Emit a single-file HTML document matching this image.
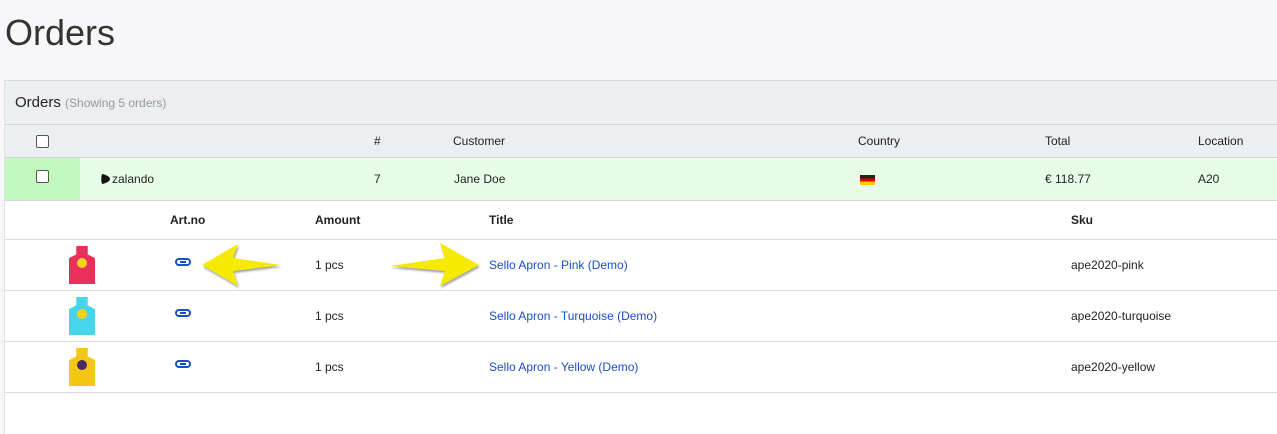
<!DOCTYPE html>
<html><head><meta charset="utf-8"><style>
*{box-sizing:border-box;margin:0;padding:0}
body{width:1277px;height:434px;background:#f7f7f9;font-family:"Liberation Sans",sans-serif;color:#222;position:relative;overflow:hidden;font-size:12px}
.abs{position:absolute}
h1{position:absolute;left:5px;top:12px;font-size:36px;font-weight:normal;color:#333;letter-spacing:0}
.panel{position:absolute;left:4px;top:80px;width:1273px;height:354px;background:#fff;border-left:1px solid #e2e2e6}
.hdr{position:absolute;left:0;top:0;width:100%;height:45px;background:#eceef2;border-top:1px solid #d8d8dc;border-bottom:1px solid #d4d6da}
.thead{position:absolute;left:0;top:45px;width:100%;height:33px;background:#eceef2;border-bottom:1px solid #d4d6da}
.grow{position:absolute;left:0;top:78px;width:100%;height:43px;background:#e8fde8;border-bottom:1px solid #d4d6da}
.cb{position:absolute;width:13px;height:13px;border:1px solid #555;border-radius:2px;background:#fff}
.sub{position:absolute;left:0;width:100%;border-bottom:1px solid #dcdcdc}
.t{position:absolute;white-space:nowrap}
a{color:#1a4fc4;text-decoration:none}
</style></head><body>
<h1>Orders</h1>
<div class="panel">
 <div class="hdr"><span class="t" style="left:10px;top:13px;font-size:15px;color:#222">Orders <span style="font-size:12px;color:#999">(Showing 5 orders)</span></span></div>
 <div class="thead">
  <div class="cb" style="left:31px;top:10px"></div>
  <span class="t" style="left:369px;top:9px">#</span>
  <span class="t" style="left:448px;top:9px">Customer</span>
  <span class="t" style="left:853px;top:9px">Country</span>
  <span class="t" style="left:1040px;top:9px">Total</span>
  <span class="t" style="left:1193px;top:9px">Location</span>
 </div>
 <div class="grow">
  <div class="abs" style="left:0;top:0;width:75px;height:42px;background:#c3f7c0"></div>
  <div class="cb" style="left:31px;top:12px"></div>
  <svg class="abs" style="left:96px;top:16px" width="9" height="10" viewBox="0 0 9 10"><path d="M1 0 C6 1 9 3 9 5 C9 7 6 9 1 10 C0 7 0 3 1 0Z" fill="#111"/></svg>
  <span class="t" style="left:107px;top:14px;font-size:12px">zalando</span>
  <span class="t" style="left:369px;top:14px">7</span>
  <span class="t" style="left:449px;top:14px">Jane Doe</span>
  <div class="abs" style="left:855px;top:17px;width:15px;height:10px;background:linear-gradient(#222 0 33%,#d00 33% 66%,#fc0 66%)"></div>
  <span class="t" style="left:1040px;top:14px">€ 118.77</span>
  <span class="t" style="left:1193px;top:14px">A20</span>
 </div>
 <div class="sub" style="top:121px;height:39px;font-weight:bold">
  <span class="t" style="left:165px;top:12px">Art.no</span>
  <span class="t" style="left:310px;top:12px">Amount</span>
  <span class="t" style="left:484px;top:12px">Title</span>
  <span class="t" style="left:1066px;top:12px">Sku</span>
 </div>
 <div class="sub" style="top:160px;height:51px">
  <div class="abs" style="left:64px;top:6px;width:26px;height:38px;background:#e8305a;clip-path:polygon(28% 0,72% 0,72% 22%,100% 32%,100% 100%,0 100%,0 32%,28% 22%)"></div>
  <div class="abs" style="left:72px;top:18px;width:10px;height:10px;border-radius:50%;background:#f5d21c"></div>
  <svg class="abs" style="left:170px;top:18px" width="16" height="8"><rect x="1" y="1" width="14" height="6" rx="3" fill="none" stroke="#1a4fc4" stroke-width="2"/><line x1="5" y1="4" x2="11" y2="4" stroke="#1a4fc4" stroke-width="2"/></svg>
  <span class="t" style="left:310px;top:18px">1 pcs</span>
  <span class="t" style="left:484px;top:18px"><a>Sello Apron - Pink (Demo)</a></span>
  <span class="t" style="left:1066px;top:18px">ape2020-pink</span>
 </div>
 <div class="sub" style="top:211px;height:51px">
  <div class="abs" style="left:64px;top:6px;width:26px;height:38px;background:#48d4ea;clip-path:polygon(28% 0,72% 0,72% 22%,100% 32%,100% 100%,0 100%,0 32%,28% 22%)"></div>
  <div class="abs" style="left:72px;top:18px;width:10px;height:10px;border-radius:50%;background:#f5d21c"></div>
  <svg class="abs" style="left:170px;top:18px" width="16" height="8"><rect x="1" y="1" width="14" height="6" rx="3" fill="none" stroke="#1a4fc4" stroke-width="2"/><line x1="5" y1="4" x2="11" y2="4" stroke="#1a4fc4" stroke-width="2"/></svg>
  <span class="t" style="left:310px;top:18px">1 pcs</span>
  <span class="t" style="left:484px;top:18px"><a>Sello Apron - Turquoise (Demo)</a></span>
  <span class="t" style="left:1066px;top:18px">ape2020-turquoise</span>
 </div>
 <div class="sub" style="top:262px;height:51px">
  <div class="abs" style="left:64px;top:6px;width:26px;height:38px;background:#f2c814;clip-path:polygon(28% 0,72% 0,72% 22%,100% 32%,100% 100%,0 100%,0 32%,28% 22%)"></div>
  <div class="abs" style="left:72px;top:18px;width:10px;height:10px;border-radius:50%;background:#4a2a60"></div>
  <svg class="abs" style="left:170px;top:18px" width="16" height="8"><rect x="1" y="1" width="14" height="6" rx="3" fill="none" stroke="#1a4fc4" stroke-width="2"/><line x1="5" y1="4" x2="11" y2="4" stroke="#1a4fc4" stroke-width="2"/></svg>
  <span class="t" style="left:310px;top:18px">1 pcs</span>
  <span class="t" style="left:484px;top:18px"><a>Sello Apron - Yellow (Demo)</a></span>
  <span class="t" style="left:1066px;top:18px">ape2020-yellow</span>
 </div>
</div>
<svg class="abs" style="left:195px;top:238px" width="300" height="54">
 <defs><filter id="s"><feDropShadow dx="1" dy="2" stdDeviation="1" flood-color="#777" flood-opacity="0.7"/></filter></defs>
 <path d="M7 27 L43 6 L38 20 L86 27 L38 33 L43 48 Z" fill="#f5ea00" filter="url(#s)"/>
 <path d="M284 27 L245 5 L250 20 L195 28 L250 33 L245 48 Z" fill="#f5ea00" filter="url(#s)"/>
</svg>
</body></html>
